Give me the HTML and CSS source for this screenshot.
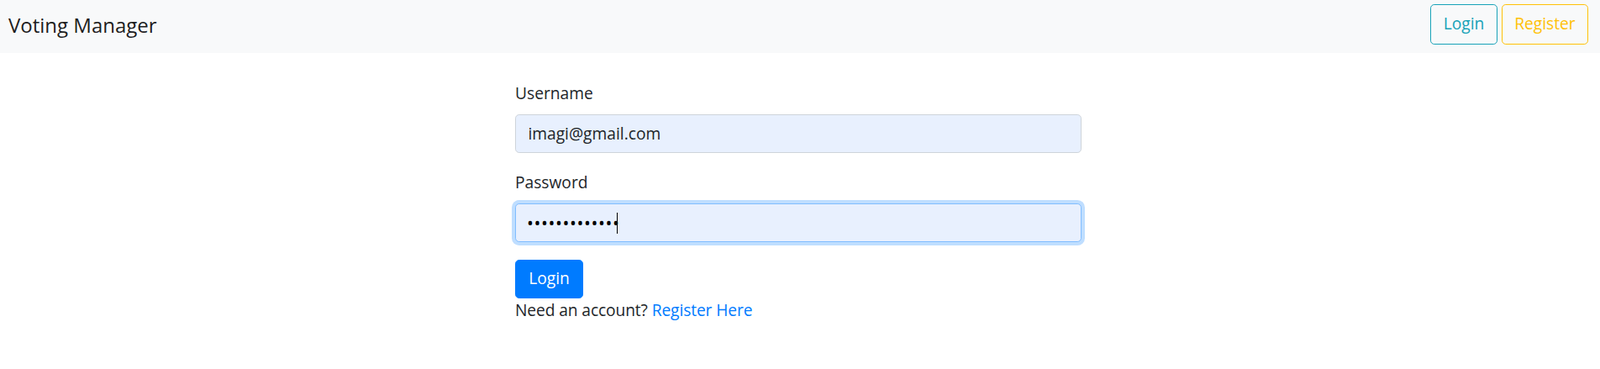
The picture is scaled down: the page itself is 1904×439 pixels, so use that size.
FILE: index.html
```html
<!DOCTYPE html>
<html lang="en">
<head>
<meta charset="utf-8">
<title>Voting Manager</title>
<link rel="stylesheet" href="styles.css">
</head>
<body>
<nav class="navbar">
  <a class="brand" href="#">Voting Manager</a>
  <div class="nav-actions">
    <a class="btn btn-outline-info" href="#">Login</a>
    <a class="btn btn-outline-warning" href="#">Register</a>
  </div>
</nav>
<main class="page">
  <form class="login-form">
    <div class="form-group">
      <label class="label" for="username">Username</label>
      <input class="form-control autofill" id="username" type="text" value="imagi@gmail.com">
    </div>
    <div class="form-group">
      <label class="label" for="password">Password</label>
      <div class="field-wrap caret">
        <input class="form-control autofill focused" id="password" type="password" value="aaaaaaaaaaaaa">
      </div>
    </div>
    <button class="btn btn-primary" type="button">Login</button>
    <p class="hint">Need an account? <a class="link" href="#">Register Here</a></p>
  </form>
</main>
</body>
</html>
```
FILE: styles.css
```css
* { box-sizing: border-box; }
html, body { margin: 0; padding: 0; }
body {
  font-family: "Segoe UI", "Open Sans", "Noto Sans", sans-serif;
  font-size: 19.2px;
  line-height: 1.5;
  color: #212529;
  background: #fff;
}
.navbar {
  height: 63px;
  background: #f8f9fa;
  display: flex;
  align-items: flex-start;
  justify-content: space-between;
  padding: 5px 14px 0 10px;
}
.brand {
  font-size: 24px;
  line-height: 36px;
  margin-top: 7px;
  color: rgba(0,0,0,.9);
  text-decoration: none;
}
.nav-actions { display: flex; gap: 5px; }
.btn {
  display: inline-block;
  font-family: inherit;
  font-size: 19.2px;
  line-height: 28.8px;
  padding: 8.4px 14.4px;
  border: 1.2px solid transparent;
  border-radius: 4.8px;
  text-decoration: none;
  text-align: center;
  background: transparent;
  cursor: pointer;
}
.btn-outline-info { color: #17a2b8; border-color: #17a2b8; height: 48px; }
.btn-outline-warning { color: #ffc107; border-color: #ffc107; height: 48px; }
.btn-primary {
  color: #fff;
  background: #007bff;
  border-color: #007bff;
  height: 46px;
  width: 81px;
  padding-top: 7.4px;
  padding-bottom: 7.4px;
}
.page { display: flex; justify-content: center; padding: 34px 0 0 0; }
.login-form { width: 674px; margin-left: -4px; }
.form-group { margin-bottom: 21px; }
.label { display: block; margin-bottom: 10px; line-height: 28.8px; }
.form-control {
  display: block;
  width: 100%;
  height: 46px;
  padding: 7px 14.4px;
  font-family: inherit;
  font-size: 19.2px;
  line-height: 28.8px;
  color: #212529;
  border: 1.2px solid #ced4da;
  border-radius: 4.8px;
  outline: none;
}
.autofill { background: #e8f0fe; }
.focused {
  border-color: #80bdff;
  box-shadow: 0 0 0 4px rgba(0,123,255,.25);
  color: #000;
  font-size: 21px;
  letter-spacing: 0.6px;
  padding-left: 13px;
}
.field-wrap { position: relative; }
.caret::after {
  content: "";
  position: absolute;
  left: 121px;
  top: 11px;
  width: 1px;
  height: 25px;
  background: #000;
}
.hint { margin: 0; line-height: 28.8px; letter-spacing: -0.1px; }
.link { color: #007bff; text-decoration: none; }
```
